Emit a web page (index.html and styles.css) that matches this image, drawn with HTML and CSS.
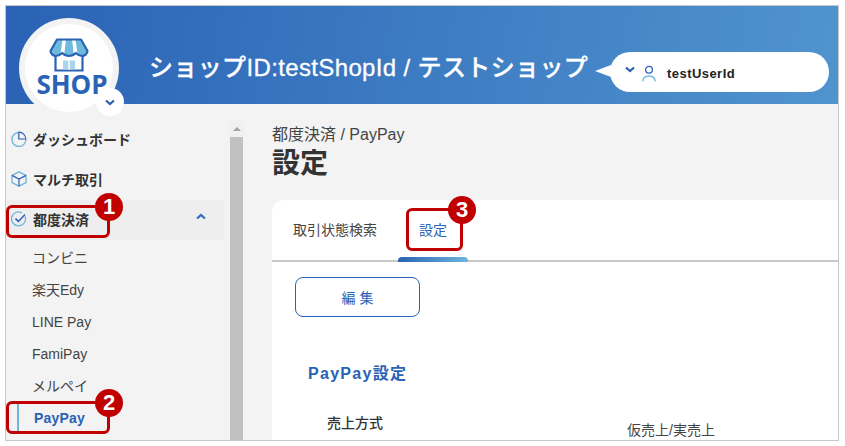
FILE: index.html
```html
<!DOCTYPE html>
<html lang="ja">
<head>
<meta charset="utf-8">
<title>設定</title>
<link rel="stylesheet" href="styles.css">
</head>
<body>
<div class="frame">
  <header class="header">
    <div class="title">ショップID:testShopId / テストショップ</div>
    <div class="user-pill">
      <svg class="pill-chevron" viewBox="0 0 10 7"><path d="M1 1.500 5 5 9 1.500" fill="none" stroke="#2a5fae" stroke-width="2.200"/></svg>
      <svg class="user-icon" viewBox="0 0 14 17"><circle cx="7" cy="4.800" r="3.400" fill="none" stroke="#2a62b5" stroke-width="1.300"/><path d="M.8 16.500C1 12.800 3.600 11 7 11s6 1.800 6.200 5.500" fill="none" stroke="#6eb5dc" stroke-width="1.300"/></svg>
      <span class="user-name">testUserId</span>
    </div>
  </header>
  <div class="body">
    <nav class="sidebar">
      <a class="nav-item">
        <svg class="nav-icon" viewBox="0 0 16 16"><path d="M7.500 1.500A7 7 0 1 0 14.900 8.500" fill="none" stroke="#6eb5dc" stroke-width="1.300"/><path d="M7.800 1.200V8H14.800A7 7 0 0 0 7.800 1.200Z" fill="none" stroke="#2a62b5" stroke-width="1.200"/></svg>
        ダッシュボード
      </a>
      <a class="nav-item">
        <svg class="nav-icon" viewBox="0 0 16 16"><path d="M8 .8 15 4.400V11.600L8 15.200 1 11.600V4.400Z" fill="none" stroke="#6eb5dc" stroke-width="1.300"/><path d="M1 4.400 8 8 15 4.400M8 8V15.200" fill="none" stroke="#2a62b5" stroke-width="1.200"/></svg>
        マルチ取引
      </a>
      <a class="nav-item nav-open">
        <svg class="nav-icon" viewBox="0 0 16 16"><path d="M14 5.200A7 7 0 1 1 11 1.800" fill="none" stroke="#6eb5dc" stroke-width="1.300"/><path d="M4.500 7.600 7.400 10.400 14 3.600" fill="none" stroke="#2a62b5" stroke-width="1.500"/></svg>
        都度決済
        <svg class="nav-chevron" viewBox="0 0 10 7"><path d="M1 5.500 5 2 9 5.500" fill="none" stroke="#2a6fc0" stroke-width="2.200"/></svg>
      </a>
      <ul class="sub-list">
        <li class="sub-item">コンビニ</li>
        <li class="sub-item">楽天Edy</li>
        <li class="sub-item">LINE Pay</li>
        <li class="sub-item">FamiPay</li>
        <li class="sub-item">メルペイ</li>
        <li class="sub-item sub-active">PayPay</li>
      </ul>
    </nav>
    <div class="scrollbar">
      <div class="scroll-arrow"><span class="scroll-tri"></span></div>
      <div class="scroll-thumb"></div>
    </div>
    <main class="main">
      <div class="breadcrumb">都度決済 / PayPay</div>
      <h1 class="page-title">設定</h1>
      <section class="card">
        <div class="tabs">
          <div class="tab">取引状態検索</div>
          <div class="tab tab-active">設定</div>
        </div>
        <div class="card-body">
          <button class="edit-btn">編 集</button>
          <h2 class="section-title">PayPay設定</h2>
          <div class="row">
            <div class="row-label">売上方式</div>
            <div class="row-value">仮売上/実売上</div>
          </div>
        </div>
      </section>
    </main>
  </div>

  <div class="logo">
    <div class="logo-inner">
      <svg class="shop-icon" viewBox="0 0 40 34">
        <path d="M8 1.500H32L38.500 13C38.500 16 35.500 18 33 18 30.800 18 28.700 16.800 26.800 15 25 16.800 22.500 18 20 18S15 16.800 13.200 15C11.300 16.800 9.200 18 7 18 4.500 18 1.500 16 1.500 13Z" fill="#fff"/>
        <path d="M8 1.500H13.500L11.500 16C10 17.300 8.500 18 7 18 4.500 18 1.500 16 1.500 13ZM17 1.500H23L24.800 16.500C23.300 17.500 21.700 18 20 18S16.700 17.500 15.200 16.500ZM26.500 1.500H32L38.500 13C38.500 16 35.500 18 33 18 31.500 18 30 17.300 28.500 16Z" fill="#6eb9dc"/>
        <path d="M8 1.500H32L38.500 13C38.500 16 35.500 18 33 18 30.800 18 28.700 16.800 26.800 15 25 16.800 22.500 18 20 18S15 16.800 13.200 15C11.300 16.800 9.200 18 7 18 4.500 18 1.500 16 1.500 13Z" fill="none" stroke="#2a62b5" stroke-width="2.200" stroke-linejoin="round"/>
        <path d="M6.500 18.500V32.500H33.500V18.500" fill="none" stroke="#2a62b5" stroke-width="2.200"/>
        <path d="M14 22.500H26V31.400H14Z" fill="#a9d6ec"/>
        <path d="M20 22.500V31.400" stroke="#fff" stroke-width="1.500"/>
      </svg>
      <div class="logo-text">SHOP</div>
    </div>
    <div class="logo-toggle">
      <svg class="toggle-chevron" viewBox="0 0 10 7"><path d="M1 1.500 5 5 9 1.500" fill="none" stroke="#2a5fae" stroke-width="2.200"/></svg>
    </div>
  </div>

  <div class="callout callout-1"></div>
  <div class="badge badge-1">1</div>
  <div class="callout callout-2"></div>
  <div class="badge badge-2">2</div>
  <div class="callout callout-3"></div>
  <div class="badge badge-3">3</div>
</div>
</body>
</html>
```
FILE: styles.css
```css
* { box-sizing: border-box; }
html, body { margin: 0; padding: 0; background: #fff; }
body {
  padding: 5px 6px 5px 5px;
  height: 446px;
  overflow: hidden;
  font-family: "Liberation Sans", "Noto Sans CJK JP", sans-serif;
  color: #333;
}
.frame {
  position: relative;
  height: 436px;
  border: 1px solid #c8c8c8;
  background: #f3f3f3;
  overflow: hidden;
  display: flex;
  flex-direction: column;
}

/* header */
.header {
  flex: 0 0 98px;
  display: flex;
  align-items: flex-start;
  padding: 46px 0 0 143px;
  background: linear-gradient(100deg, #2a62b5 0%, #5094cf 100%);
}
.title {
  flex: 0 0 461px;
  line-height: 32px;
  font-size: 24px;
  font-weight: 500;
  color: #fff;
  white-space: nowrap;
  letter-spacing: 0.36px;
  -webkit-text-stroke: 0.3px #fff;
}
.user-pill {
  position: relative;
  flex: 0 0 219px;
  height: 40px;
  display: flex;
  align-items: center;
  padding-left: 15px;
  background: #fff;
  border-radius: 20px;
}
.user-pill::before {
  content: "";
  position: absolute;
  left: -15px;
  top: 13px;
  border-style: solid;
  border-width: 6px 16px 6px 0;
  border-color: transparent #fff transparent transparent;
}
.pill-chevron { width: 10px; height: 7px; margin-top: -6px; }
.user-icon { width: 14px; height: 17px; margin-left: 7px; margin-top: 3px; }
.user-name { margin-left: 11px; margin-top: 3px; font-size: 13px; font-weight: 700; color: #222; letter-spacing: 0.45px; }

/* body */
.body { flex: 1; min-height: 0; display: flex; }
.sidebar { flex: 0 0 222px; padding: 16px 4px 0 0; }
.nav-item {
  height: 40px;
  display: flex;
  align-items: center;
  padding: 0 0 2px 5px;
  font-size: 14px;
  font-weight: 700;
  color: #333;
}
.nav-icon { width: 16px; height: 16px; margin-right: 6px; flex: none; }
.nav-open { background: #eee; }
.nav-chevron { width: 10px; height: 7px; margin-left: auto; margin-right: 18px; margin-top: -6px; }
.sub-list { list-style: none; margin: 2px 0 0; padding: 0; }
.sub-item {
  height: 32px;
  line-height: 32px;
  padding-left: 26px;
  font-size: 14px;
  color: #444;
}
.sub-active {
  position: relative;
  padding-left: 28px;
  font-weight: 700;
  color: #2a62b5;
  letter-spacing: 0.2px;
}
.sub-active::before {
  content: "";
  position: absolute;
  left: 11px;
  top: 0;
  bottom: 0;
  width: 2px;
  background: #6eb5dc;
}

/* scrollbar */
.scrollbar { flex: 0 0 17px; padding-top: 16px; display: flex; flex-direction: column; align-items: center; }
.scroll-arrow { flex: 0 0 17px; width: 17px; display: flex; align-items: center; justify-content: center; background: #f1f1f1; }
.scroll-tri { border-style: solid; border-width: 0 4px 4px; border-color: transparent transparent #a3a3a3; }
.scroll-thumb { flex: 1; width: 13px; background: #c1c1c1; }

/* main */
.main { flex: 1; min-width: 0; padding: 20px 0 0 27px; }
.breadcrumb { font-size: 16px; line-height: 22px; color: #444; }
.page-title { margin: 0; font-size: 28px; line-height: 36px; font-weight: 700; color: #333; }
.card { margin-top: 18px; height: 300px; background: #fff; border-radius: 12px 0 0 0; }
.tabs { position: relative; height: 62px; display: flex; padding-left: 21px; border-bottom: 2px solid #c8c8c8; }
.tab { height: 60px; line-height: 60px; font-size: 14px; color: #444; margin-right: 42px; }
.tab-active { position: relative; width: 27px; color: #2a62b5; white-space: nowrap; }
.tab-active::after {
  content: "";
  position: absolute;
  left: -21px;
  bottom: -2px;
  width: 70px;
  height: 5px;
  border-radius: 4px 4px 0 0;
  background: linear-gradient(90deg, #2a62b5, #6eb5dc);
}
.card-body { padding: 15px 0 0 23px; }
.edit-btn {
  display: block;
  width: 125px;
  height: 40px;
  padding: 0;
  background: #fff;
  border: 1px solid #2a62b5;
  border-radius: 8px;
  font: inherit;
  font-size: 14px;
  color: #2a62b5;
}
.section-title { margin: 46px 0 0 13px; font-size: 16px; line-height: 22px; font-weight: 700; color: #2a62b5; letter-spacing: 1.3px; }
.row { display: flex; margin: 26px 0 0 32px; }
.row-label { flex: 0 0 300px; font-size: 14px; line-height: 24px; font-weight: 500; color: #333; }
.row-value { margin-top: 7px; font-size: 14px; line-height: 24px; color: #444; }

/* logo overlay */
.logo {
  position: absolute;
  left: 13px;
  top: 12px;
  width: 100px;
  height: 100px;
  border-radius: 50%;
  background: #f3f3f3;
  padding: 6px;
}
.logo-inner {
  width: 88px;
  height: 88px;
  border-radius: 50%;
  background: #fff;
  display: flex;
  flex-direction: column;
  align-items: center;
  padding-top: 14px;
}
.shop-icon { width: 40px; height: 34px; flex: none; }
.logo-text { margin: -1px 0 0 6px; font-size: 26px; line-height: 26px; font-weight: 700; letter-spacing: 0; color: #2a62b5; font-family: "Open Sans", "Liberation Sans", sans-serif; }
.logo-toggle {
  position: absolute;
  left: 77px;
  top: 70px;
  width: 28px;
  height: 28px;
  border-radius: 50%;
  background: #fff;
  display: flex;
  align-items: center;
  justify-content: center;
}
.toggle-chevron { width: 10px; height: 7px; }

/* annotations */
.callout { position: absolute; border: 3px solid #c00000; border-radius: 6px; }
.callout-1 { left: 0; top: 199px; width: 104px; height: 33px; }
.callout-2 { left: 0; top: 395px; width: 104px; height: 33px; }
.callout-3 { left: 400px; top: 202px; width: 57px; height: 43px; }
.badge {
  position: absolute;
  width: 28px;
  height: 28px;
  border-radius: 50%;
  background: #c00000;
  color: #fff;
  font-size: 22px;
  font-weight: 700;
  line-height: 28px;
  text-align: center;
  font-family: "Liberation Sans", sans-serif;
}
.badge-1 { left: 89px; top: 187px; }
.badge-2 { left: 89px; top: 383px; }
.badge-3 { left: 442px; top: 190px; }
```
